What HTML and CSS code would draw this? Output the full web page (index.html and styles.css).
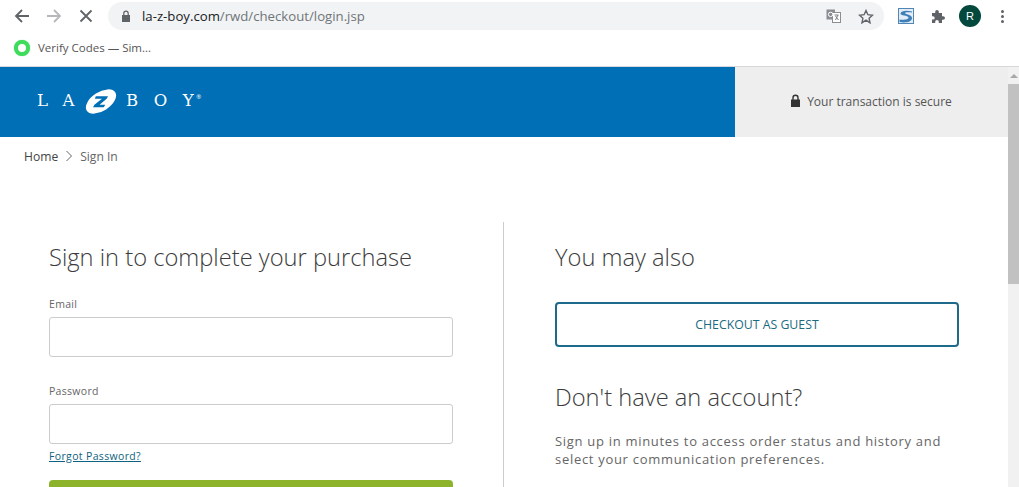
FILE: index.html
```html
<!DOCTYPE html>
<html lang="en">
<head>
<meta charset="utf-8">
<title>Sign In</title>
<link rel="stylesheet" href="styles.css">
</head>
<body>
<div class="toolbar">
  <svg class="nav-icon back" width="16" height="16" viewBox="0 0 16 16"><path d="M15 8H2M8 2L2 8l6 6" fill="none" stroke="#5f6368" stroke-width="1.8"/></svg>
  <svg class="nav-icon fwd" width="16" height="16" viewBox="0 0 16 16"><path d="M1 8h13M8 2l6 6-6 6" fill="none" stroke="#b5b7ba" stroke-width="1.8"/></svg>
  <svg class="nav-icon stop" width="14" height="14" viewBox="0 0 14 14"><path d="M1.5 1.5l11 11M12.5 1.5l-11 11" fill="none" stroke="#5f6368" stroke-width="1.8"/></svg>
  <div class="omnibox">
    <svg class="omni-lock" width="10" height="12" viewBox="0 0 10 12"><path d="M2.2 5V3.4a2.8 2.8 0 0 1 5.6 0V5H9v7H1V5zM3.4 5h3.2V3.4a1.6 1.6 0 0 0-3.2 0z" fill="#5f6368"/></svg>
    <span class="url"><span class="host">la-z-boy.com</span>/rwd/checkout/login.jsp</span>
    <svg class="translate" width="15" height="14" viewBox="0 0 15 14"><rect x="0.5" y="0.5" width="8.5" height="10" fill="#8a8d91"/><rect x="6.5" y="3.5" width="8" height="10" fill="#fff" stroke="#8a8d91"/><circle cx="4.6" cy="5.4" r="2.2" fill="none" stroke="#fff"/><path d="M8.5 6h4M12 6l-2.5 5M9.5 7l3 4" stroke="#7c7f83" fill="none"/></svg>
    <svg class="star" width="16" height="15" viewBox="0 0 16 15"><path d="M8 1.5l1.9 4.2 4.6.5-3.4 3.1.9 4.5L8 11.100l-4 2.700.9-4.500L1.500 6.200l4.600-.5z" fill="none" stroke="#5f6368" stroke-width="1.400"/></svg>
  </div>
  <svg class="ext-s" width="16" height="16" viewBox="0 0 16 16"><rect x="0.5" y="0.500" width="15" height="15" fill="#e4edf5" stroke="#4f86b5"/><path d="M14 3.500C9 2 3 2.500 2.500 5.500 2.200 8 10 7 10.500 9.500 10.800 11.500 6 12 1.500 11.500V14c5 1 12.500.5 12.500-4 0-3.500-7-3.500-7-5 0-1 3.500-1 7-.5z" fill="#3d7fb8"/></svg>
  <svg class="ext-puzzle" width="15" height="15" viewBox="0 0 15 15"><path d="M1 4h3.200V2.800a1.800 1.800 0 0 1 3.600 0V4H11v3.200h1.200a1.800 1.800 0 0 1 0 3.600H11V14H7.800v-1.200a1.800 1.800 0 0 0-3.600 0V14H1v-3.400h1a1.700 1.700 0 0 0 0-3.400H1z" fill="#5f6368"/></svg>
  <div class="avatar">R</div>
  <div class="kebab"><i></i><i></i><i></i></div>
</div>
<div class="bookmarks">
  <span class="bm-dot"></span>
  <span class="bm-label">Verify Codes — Sim...</span>
</div>
<div class="viewport">
  <div class="page">
    <header class="site-header">
      <div class="brand">
        <div class="logo">
          <span class="logo-text la">LA</span>
          <svg class="logo-z" width="32" height="27" viewBox="0 0 34 28"><ellipse cx="17" cy="14" rx="18" ry="10" transform="rotate(-33 17 14)" fill="#fff"/><path d="M11.500 8.500h13l-1.500 2.500-7.500 6.500h6l-1.500 2.500H8.500l1.500-2.500 8-6.500h-7.500z" fill="#006fb5"/></svg>
          <span class="logo-text boy">BOY</span>
          <span class="tm">®</span>
        </div>
      </div>
      <div class="secure">
        <svg class="secure-lock" width="11" height="13" viewBox="0 0 11 13"><path d="M2.300 5.500V3.700a3.200 3.200 0 0 1 6.400 0v1.800h1.300V13H1V5.500zM3.700 5.500h3.600V3.700a1.800 1.800 0 0 0-3.600 0z" fill="#333"/></svg>
        <span>Your transaction is secure</span>
      </div>
    </header>
    <nav class="crumbs">
      <span class="crumb-home">Home</span>
      <svg class="crumb-sep" width="8" height="12" viewBox="0 0 8 12"><path d="M1.500 1l5 5-5 5" fill="none" stroke="#666" stroke-width="1"/></svg>
      <span class="crumb-current">Sign In</span>
    </nav>
    <main class="columns">
      <section class="col col-left">
        <h1 class="title">Sign in to complete your purchase</h1>
        <label class="label label-email">Email</label>
        <div class="input"></div>
        <label class="label label-pass">Password</label>
        <div class="input"></div>
        <a class="forgot">Forgot Password?</a>
        <div class="submit"></div>
      </section>
      <section class="col col-right">
        <h2 class="title">You may also</h2>
        <div class="guest">CHECKOUT AS GUEST</div>
        <h2 class="title title-account">Don't have an account?</h2>
        <p class="blurb">Sign up in minutes to access order status and history and select your communication preferences.</p>
      </section>
    </main>
  </div>
  <div class="scrollbar">
    <span class="sb-arrow"></span>
    <span class="sb-thumb"></span>
  </div>
</div>
</body>
</html>
```

FILE: styles.css
```css
* { box-sizing: border-box; }
html, body { margin: 0; padding: 0; height: 487px; overflow: hidden; background: #fff; }
body { font-family: "Open Sans", "Liberation Sans", sans-serif; color: #333; }

.toolbar { height: 32px; display: flex; align-items: center; position: relative; }
.nav-icon { flex: none; }
.back { margin-left: 14px; }
.fwd { margin-left: 16px; }
.stop { margin-left: 17px; }
.omnibox { width: 776px; height: 28px; margin-left: 15px; background: #f1f3f4; border-radius: 14px; display: flex; align-items: center; padding-left: 13px; padding-right: 10px; }
.omni-lock { flex: none; }
.url { font-size: 13.200px; color: #70757a; margin-left: 11px; flex: 1; white-space: nowrap; }
.host { color: #202124; }
.translate { flex: none; margin-right: 17px; }
.star { flex: none; margin-right: 0; }
.ext-s { flex: none; margin-left: 14px; }
.ext-puzzle { flex: none; margin-left: 17px; }
.avatar { flex: none; width: 22px; height: 22px; border-radius: 50%; background: #03483d; color: #fff; font: 11px "Liberation Sans", sans-serif; display: flex; align-items: center; justify-content: center; margin-left: 13px; }
.kebab { flex: none; margin-left: 20px; display: flex; flex-direction: column; gap: 2px; }
.kebab i { width: 3px; height: 3px; border-radius: 50%; background: #5f6368; display: block; }

.bookmarks { height: 35px; border-bottom: 1px solid #d6d7d9; display: flex; align-items: center; padding-left: 14px; padding-bottom: 2px; }
.bm-dot { width: 16px; height: 16px; border-radius: 50%; border: 4px solid #3fdc5c; background: #fff; box-shadow: 0 0 1px #3fdc5c; }
.bm-label { font-size: 11.500px; margin-left: 8px; margin-bottom: 2px; color: #555; }

.viewport { display: flex; height: 420px; overflow: hidden; }
.page { width: 1008px; flex: none; }

.site-header { height: 70px; display: flex; }
.brand { width: 735px; background: #006fb5; display: flex; align-items: center; padding-left: 37px; padding-bottom: 1px; }
.logo { display: flex; align-items: center; color: #fff; height: 34px; }
.logo-text { font: 400 16.500px "DejaVu Serif", serif; letter-spacing: 15.500px; line-height: 1; }
.la { letter-spacing: 14.500px; }
.logo-z { flex: none; margin-left: -4px; margin-right: -5px; }
.boy { margin-left: 14px; margin-right: -13px; }
.tm { font-size: 6px; line-height: 1; margin-bottom: 10px; margin-left: 0; }
.secure { flex: 1; background: #eee; display: flex; align-items: center; justify-content: center; gap: 6px; font-size: 12px; color: #555; padding-right: 1px; padding-bottom: 2px; }
.secure-lock { flex: none; margin-bottom: 1px; }

.crumbs { height: 38px; padding-left: 24px; display: flex; align-items: center; font-size: 12.100px; color: #444; }
.crumb-sep { margin: 0 7px; }
.crumb-current { color: #666; }

.columns { display: flex; margin-top: 47px; padding-left: 49px; }
.col-left { width: 455px; height: 300px; border-right: 1px solid #ccc; padding-right: 50px; }
.col-right { width: 455px; padding-left: 51px; padding-right: 0; }
.title { margin: 0; padding-top: 17px; font-weight: 300; font-size: 23.700px; line-height: 36px; color: #3c3c3c; white-space: nowrap; }
.label { display: block; font-size: 10.500px; line-height: 14px; color: #666; letter-spacing: .3px; }
.label-email { margin-top: 22px; margin-bottom: 6px; }
.label-pass { margin-top: 27px; margin-bottom: 6px; }
.input { height: 40px; border: 1px solid #ccc; border-radius: 3px; background: #fff; }
.forgot { display: block; font-size: 10.500px; line-height: 14px; margin-top: 5px; color: #0e6280; text-decoration: underline; letter-spacing: .35px; }
.submit { height: 40px; margin-top: 17px; background: #8db32a; border-radius: 4px; }
.guest { margin-top: 27px; height: 45px; border: 2px solid #1f6a8a; border-radius: 4px; display: flex; align-items: center; justify-content: center; font-size: 12.300px; color: #1a6a80; }
.title-account { margin-top: 16px; padding-top: 16px; }
.blurb { margin: 17px 0 0; font-size: 13px; line-height: 18px; color: #666; letter-spacing: .7px; }

.scrollbar { width: 11px; flex: none; background: #f1f1f1; display: flex; flex-direction: column; align-items: center; }
.sb-arrow { margin-top: 7px; border-left: 4px solid transparent; border-right: 4px solid transparent; border-bottom: 4px solid #a8a8a8; }
.sb-thumb { width: 11px; height: 200px; margin-top: 6px; background: #c1c1c1; }
```
